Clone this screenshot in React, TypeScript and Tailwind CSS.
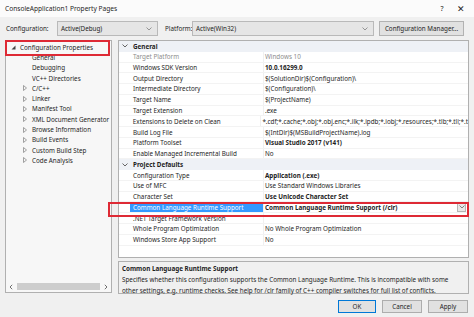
import React from 'react';

type Prop = {
  name: string;
  value?: string;
  bold?: boolean;
  dim?: boolean;
  cat?: boolean;
  selected?: boolean;
};

const props: Prop[] = [
  { name: 'General', cat: true },
  { name: 'Target Platform', value: 'Windows 10', dim: true },
  { name: 'Windows SDK Version', value: '10.0.16299.0', bold: true },
  { name: 'Output Directory', value: '$(SolutionDir)$(Configuration)\\' },
  { name: 'Intermediate Directory', value: '$(Configuration)\\' },
  { name: 'Target Name', value: '$(ProjectName)' },
  { name: 'Target Extension', value: '.exe' },
  {
    name: 'Extensions to Delete on Clean',
    value: '*.cdf;*.cache;*.obj;*.obj.enc;*.ilk;*.ipdb;*.iobj;*.resources;*.tlb;*.tli;*.t',
  },
  { name: 'Build Log File', value: '$(IntDir)$(MSBuildProjectName).log' },
  { name: 'Platform Toolset', value: 'Visual Studio 2017 (v141)', bold: true },
  { name: 'Enable Managed Incremental Build', value: 'No' },
  { name: 'Project Defaults', cat: true },
  { name: 'Configuration Type', value: 'Application (.exe)', bold: true },
  { name: 'Use of MFC', value: 'Use Standard Windows Libraries' },
  { name: 'Character Set', value: 'Use Unicode Character Set', bold: true },
  {
    name: 'Common Language Runtime Support',
    value: 'Common Language Runtime Support (/clr)',
    bold: true,
    selected: true,
  },
  { name: '.NET Target Framework Version', value: '' },
  { name: 'Whole Program Optimization', value: 'No Whole Program Optimization' },
  { name: 'Windows Store App Support', value: 'No' },
];

const tree: { label: string; expander: boolean }[] = [
  { label: 'General', expander: false },
  { label: 'Debugging', expander: false },
  { label: 'VC++ Directories', expander: false },
  { label: 'C/C++', expander: true },
  { label: 'Linker', expander: true },
  { label: 'Manifest Tool', expander: true },
  { label: 'XML Document Generator', expander: true },
  { label: 'Browse Information', expander: true },
  { label: 'Build Events', expander: true },
  { label: 'Custom Build Step', expander: true },
  { label: 'Code Analysis', expander: true },
];

const Chevron = ({ className = '' }: { className?: string }) => (
  <svg width="6" height="4" viewBox="0 0 6 4" className={className}>
    <path d="M0.5 0.5 L3 3 L5.5 0.5" fill="none" stroke="currentColor" strokeWidth="0.9" />
  </svg>
);

const Combo = ({ text, width }: { text: string; width: string }) => (
  <div
    className={`${width} h-[15px] bg-[#e5e5e5] border border-[#b9b9b9] flex items-center pl-[3px] pr-[5px]`}
  >
    <span className="flex-1">{text}</span>
    <Chevron className="text-[#8a8a8a]" />
  </div>
);

const PropRow = ({ p }: { p: Prop }) => {
  if (p.cat) {
    return (
      <div className="h-[10.78px] shrink-0 flex items-center bg-[#eef1f6]">
        <div className="w-[11px] flex justify-center">
          <Chevron className="text-[#555]" />
        </div>
        <span className="pl-[3px] font-bold">{p.name}</span>
      </div>
    );
  }
  return (
    <div className="h-[10.78px] shrink-0 flex items-center border-b border-[#f3f3f3]">
      <div className="w-[11px] h-full" />
      <div
        className={`w-[133px] h-full flex items-center pl-[3px] whitespace-nowrap ${
          p.selected ? 'bg-[#3399ff] text-white' : p.dim ? 'text-[#8d8d8d]' : ''
        }`}
      >
        {p.name}
      </div>
      <div
        className={`flex-1 h-full flex items-center pl-[1px] whitespace-nowrap border-l border-[#f0f0f0] ${
          p.bold ? 'font-bold' : ''
        } ${p.dim ? 'text-[#8d8d8d]' : ''}`}
      >
        <span className="flex-1">{p.value}</span>
        {p.selected && (
          <div className="w-[9px] h-[9px] mr-[2px] bg-[#e8e8e8] border border-[#b5b5b5] flex items-center justify-center text-[#777]">
            <Chevron />
          </div>
        )}
      </div>
    </div>
  );
};

export default function App() {
  return (
    <div className="w-[474px] h-[317px] bg-[#f0f0f0] relative overflow-hidden flex flex-col font-['Noto_Sans',sans-serif] text-[6.3px] leading-[9px] text-[#1e1e1e]">
      {/* title bar */}
      <div className="h-[17px] bg-[#fbfbfb] flex items-center pl-[5px] pr-[9px]">
        <span className="flex-1 text-[6.6px]">ConsoleApplication1 Property Pages</span>
        <span className="w-[10px] text-center text-[7px]">?</span>
        <span className="w-[18px] text-right text-[9px] font-light">✕</span>
      </div>

      {/* configuration row */}
      <div className="h-[23px] flex items-center pl-[6px]">
        <span className="w-[51px]">Configuration:</span>
        <Combo text="Active(Debug)" width="w-[101px]" />
        <span className="w-[27px] ml-[7px]">Platform:</span>
        <Combo text="Active(Win32)" width="w-[182px]" />
        <div className="w-[85px] h-[15px] ml-[5px] bg-[#e1e1e1] border border-[#b2b2b2] flex items-center justify-center">
          Configuration Manager...
        </div>
      </div>

      {/* body */}
      <div className="flex gap-[6px] pl-[5px] h-[256px]">
        {/* tree */}
        <div className="w-[107px] h-[253px] border border-[#b0b0b0] bg-[#f7f7f7] flex flex-col">
          <div className="pt-[1px]">
            <div className="h-[10.3px] flex items-center pl-[5px]">
              <svg width="5" height="5" viewBox="0 0 5 5" className="mr-[4px]">
                <path d="M4.5 0.5 L4.5 4.5 L0.5 4.5 Z" fill="#444" />
              </svg>
              <span>Configuration Properties</span>
            </div>
            {tree.map((t) => (
              <div key={t.label} className="h-[10.3px] flex items-center pl-[17px]">
                <div className="w-[9px]">
                  {t.expander && (
                    <svg width="4" height="6" viewBox="0 0 4 6">
                      <path d="M0.5 0.5 L3.5 3 L0.5 5.5 Z" fill="none" stroke="#8a8a8a" strokeWidth="0.8" />
                    </svg>
                  )}
                </div>
                <span className="whitespace-nowrap">{t.label}</span>
              </div>
            ))}
          </div>
          <div className="flex-1" />
          <div className="h-[9px] flex items-center px-[3px] mb-[1px] text-[#606060]">
            <svg width="4" height="6" viewBox="0 0 4 6">
              <path d="M3.2 0.8 L1 3 L3.2 5.2" fill="none" stroke="currentColor" strokeWidth="0.9" />
            </svg>
            <div className="flex-1 h-[7px] mx-[4px] bg-[#cdcdcd]" />
            <svg width="4" height="6" viewBox="0 0 4 6">
              <path d="M0.8 0.8 L3 3 L0.8 5.2" fill="none" stroke="currentColor" strokeWidth="0.9" />
            </svg>
          </div>
        </div>

        {/* right side */}
        <div className="w-[351px] flex flex-col">
          <div className="h-[218px] bg-white border border-[#b0b0b0] flex flex-col overflow-hidden">
            {props.map((p) => (
              <PropRow key={p.name} p={p} />
            ))}
          </div>
          <div className="h-[33px] mt-[3px] border border-[#b0b0b0] bg-[#f0f0f0] px-[3px] pt-[2px] flex flex-col gap-[1px]">
            <span className="font-bold">Common Language Runtime Support</span>
            <span className="leading-[11px]">
              Specifies whether this configuration supports the Common Language Runtime. This is incompatible
              with some other settings, e.g. runtime checks. See help for /clr family of C++ compiler switches
              for full list of conflicts.
            </span>
          </div>
        </div>
      </div>

      {/* buttons */}
      <div className="flex justify-end gap-[6px] pr-[6px] pt-[4px]">
        <div className="w-[38px] h-[13px] bg-[#e1e1e1] border border-[#0078d7] flex items-center justify-center">
          OK
        </div>
        <div className="w-[40px] h-[13px] bg-[#e1e1e1] border border-[#adadad] flex items-center justify-center">
          Cancel
        </div>
        <div className="w-[40px] h-[13px] bg-[#e1e1e1] border border-[#adadad] flex items-center justify-center">
          Apply
        </div>
      </div>

      {/* highlight boxes */}
      <div className="absolute left-[5px] top-[40px] w-[105px] h-[16px] border-2 border-[#de2a35]" />
      <div className="absolute left-[108px] top-[202px] w-[361px] h-[15px] border-2 border-[#de2a35]" />
    </div>
  );
}
